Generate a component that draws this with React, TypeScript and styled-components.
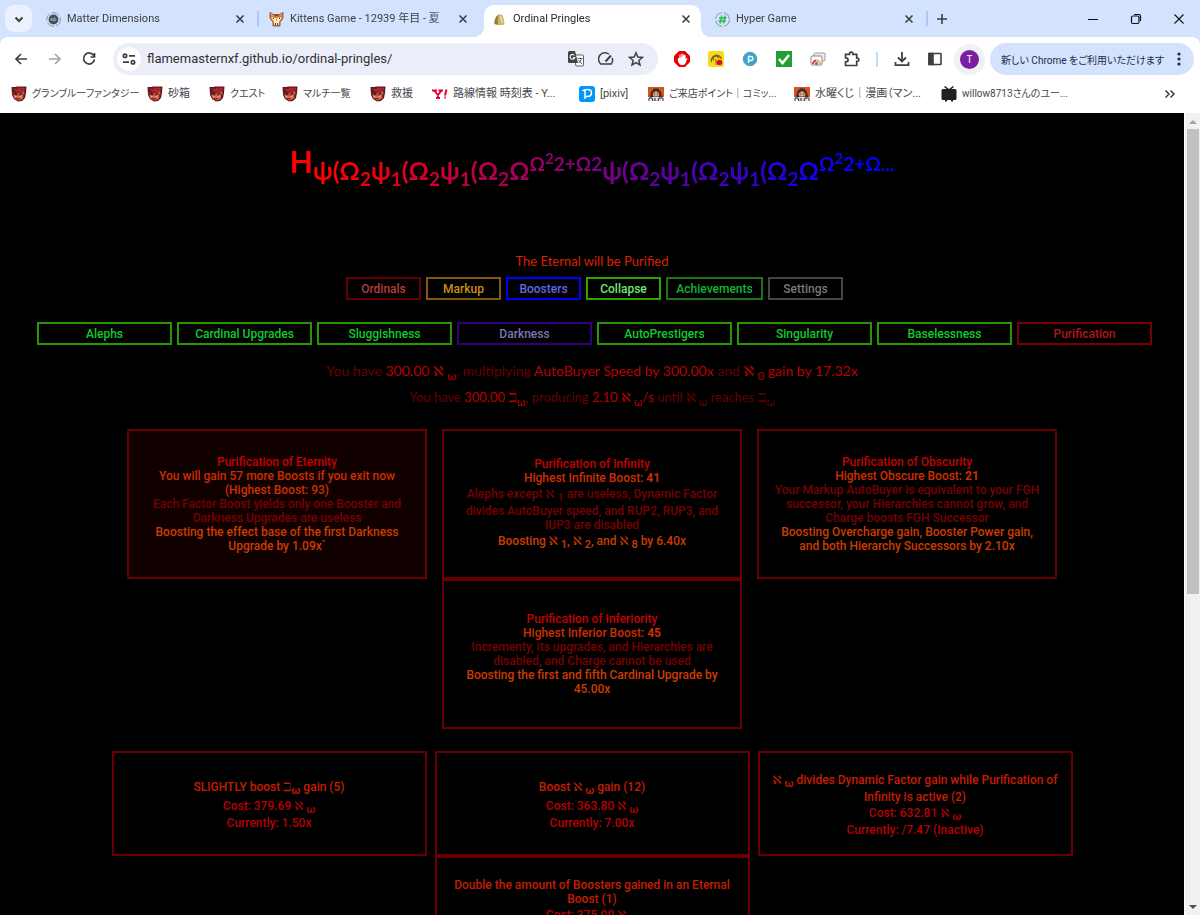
import React from "react";
import styled, { createGlobalStyle, css } from "styled-components";

const uiFont = `Roboto, "Noto Sans CJK JP", sans-serif`;
const gameFont = `Roboto, "DejaVu Sans", sans-serif`;
const narrowFont = `Lato, "DejaVu Sans", sans-serif`;

const GlobalStyle = createGlobalStyle`
  * { box-sizing: border-box; }
  body { margin: 0; background: #000; overflow: hidden; }
  button, input { font: inherit; }
  sub, sup { line-height: 0; }
`;

const Browser = styled.div`
  display: flex;
  flex-direction: column;
  height: 100vh;
  font-family: ${uiFont};
`;

/* ---------- tab strip ---------- */

const TabStrip = styled.div`
  display: flex;
  align-items: center;
  flex: none;
  height: 37px;
  padding-left: 5px;
  background: #d3e3fd;
`;

const IconButton = styled.button<{ $w?: number; $tone?: string }>`
  display: flex;
  align-items: center;
  justify-content: center;
  flex: none;
  width: ${(p) => p.$w ?? 24}px;
  height: 24px;
  padding: 0;
  border: 0;
  background: none;
  color: ${(p) => p.$tone ?? "#3c4043"};
`;

const TabSearch = styled(IconButton)`
  width: 27px;
  height: 27px;
  margin-right: 6px;
  border-radius: 9px;
  background: #ebf2fe;
`;

const Tab = styled.div<{ $active?: boolean; $divider?: boolean }>`
  position: relative;
  display: flex;
  align-items: center;
  flex: 0 1 217px;
  min-width: 0;
  align-self: flex-end;
  height: 32px;
  margin-right: 6px;
  padding: 0 7px 4px 8px;
  gap: 6px;
  font-size: 11px;
  line-height: 16px;
  color: #3c4046;
  ${(p) =>
    p.$active &&
    css`
      background: #fff;
      border-radius: 10px 10px 0 0;
      color: #26282b;
      &::before, &::after {
        content: "";
        position: absolute;
        bottom: 0;
        width: 10px;
        height: 10px;
      }
      &::before { left: -10px; background: radial-gradient(circle at 0 0, transparent 10px, #fff 10px); }
      &::after { right: -10px; background: radial-gradient(circle at 100% 0, transparent 10px, #fff 10px); }
    `}
  ${(p) =>
    p.$divider &&
    css`
      &::after {
        content: "";
        position: absolute;
        right: -4px;
        top: 6px;
        width: 2px;
        height: 15px;
        background: #a8c7fa;
      }
    `}
`;

const TabTitle = styled.span`
  flex: 1;
  overflow: hidden;
  white-space: nowrap;
  mask-image: linear-gradient(to right, #000 88%, transparent 105%);
`;

const CloseButton = styled(IconButton)`
  width: 16px;
  height: 16px;
`;

const WindowControls = styled.div`
  display: flex;
  margin-left: auto;
`;

/* ---------- toolbar ---------- */

const Toolbar = styled.div`
  display: flex;
  align-items: center;
  flex: none;
  height: 44px;
  padding: 0 6px 0 4px;
  background: #fff;
  border-radius: 8px 8px 0 0;
`;

const ToolbarBack = styled.div`
  flex: none;
  background: #d3e3fd;
`;

const Omnibox = styled.form`
  display: flex;
  align-items: center;
  flex: 1;
  height: 32px;
  margin: 0 7px 0 7px;
  padding: 0 7px 0 4px;
  border-radius: 16px;
  background: #ebeef8;
`;

const SiteInfo = styled(IconButton)`
  border-radius: 50%;
  background: #fff;
  margin-right: 6px;
`;

const Address = styled.input`
  flex: 1;
  min-width: 0;
  padding: 0;
  border: 0;
  outline: 0;
  background: none;
  font-size: 13px;
  line-height: 18px;
  color: #2f3136;
`;

const ToolDivider = styled.span`
  width: 2px;
  height: 15px;
  margin: 0 7px;
  background: #c6dafc;
`;

const Profile = styled.button`
  display: flex;
  align-items: center;
  justify-content: center;
  flex: none;
  width: 31px;
  height: 31px;
  margin: 0 5px 0 3px;
  padding: 0;
  border: 6px solid #f1f1f1;
  border-radius: 50%;
  background: #7b1fa2;
  color: #fff;
  font-size: 10px;
`;

const UpdateButton = styled.button`
  display: flex;
  align-items: center;
  justify-content: space-between;
  flex: none;
  width: 204px;
  height: 32px;
  padding: 0 13px 0 11px;
  border: 0;
  border-radius: 16px;
  background: #d3e3fd;
  color: #1c2b4a;
  font-size: 10px;
  white-space: nowrap;
  font-feature-settings: "palt";
`;

/* ---------- bookmarks ---------- */

const Bookmarks = styled.nav`
  display: flex;
  align-items: center;
  flex: none;
  height: 32px;
  padding: 0 21px 6px 11px;
  background: #fff;
`;

const Bookmark = styled.a<{ $w: number; $small: boolean }>`
  display: flex;
  align-items: center;
  flex: none;
  gap: 5px;
  width: ${(p) => p.$w}px;
  color: #44474c;
  font-size: ${(p) => (p.$small ? 10 : 11)}px;
  line-height: 16px;
  white-space: nowrap;
  text-decoration: none;
  font-feature-settings: "palt";
  svg { flex: none; }
`;

const MoreBookmarks = styled(IconButton)`
  width: 18px;
  margin-left: auto;
`;

/* ---------- page ---------- */

const Viewport = styled.div`
  display: flex;
  flex: 1;
  min-height: 0;
`;

const Page = styled.main`
  flex: 1;
  overflow: hidden;
  background: #000;
  font-family: ${gameFont};
  text-align: center;
`;

const Ordinal = styled.h1`
  width: fit-content;
  height: 64px;
  margin: 28px auto 0;
  font: 700 30px/40px Lato, "DejaVu Sans", sans-serif;
  white-space: nowrap;
  color: transparent;
  background: linear-gradient(to right, #f00 8%, #800080 50%, #00f 94%);
  background-clip: text;
  -webkit-background-clip: text;
`;

const Low = styled.sub`
  font-size: 25px;
  sub, sup { font-size: 19px; }
  sup sup { font-size: 15px; }
`;

const Tagline = styled.p`
  margin: 46px 0 0;
  font: 13px/20px ${narrowFont};
  color: #d92000;
`;

const TabRow = styled.nav<{ $top: number }>`
  display: flex;
  justify-content: center;
  gap: 5px;
  margin-top: ${(p) => p.$top}px;
  padding-left: 5px;
`;

const GameTab = styled.button<{ $border: string; $ink: string; $w: number }>`
  width: ${(p) => p.$w}px;
  height: 23px;
  padding: 0;
  border: 2px solid ${(p) => p.$border};
  background: #000;
  color: ${(p) => p.$ink};
  font-size: 12px;
  font-weight: 500;
  line-height: 16px;
`;

const Status = styled.p<{ $size: number }>`
  margin: 0;
  font: ${(p) => p.$size}px/26px ${narrowFont};
  color: #660000;
  b { font-weight: 400; color: #b80000; }
`;

const StatusBlock = styled.section`
  margin-top: 13px;
`;

const CardGrid = styled.section<{ $w: number; $gap: number; $top: number }>`
  display: grid;
  grid-template-columns: repeat(3, ${(p) => p.$w}px);
  column-gap: ${(p) => p.$gap}px;
  justify-content: center;
  margin-top: ${(p) => p.$top}px;
`;

const Card = styled.button<{ $h: number; $active?: boolean; $middle?: boolean }>`
  height: ${(p) => p.$h}px;
  padding: 0 4px;
  border: 2px solid #660000;
  background: ${(p) => (p.$active ? "#110000" : "#000")};
  font-size: 12px;
  font-weight: 500;
  line-height: 14px;
  ${(p) => p.$middle && css`grid-column: 2;`}
  sub { font-size: 11px; }
`;

const Line = styled.span<{ $tone: keyof typeof tones; $tall?: boolean }>`
  display: block;
  line-height: ${(p) => (p.$tall ? 19 : 14)}px;
  color: ${(p) => tones[p.$tone]};
`;

const tones = {
  name: "#c40000",
  best: "#cc2f00",
  rule: "#770000",
  boost: "#cc3c00",
  effect: "#c41e00",
  cost: "#b80000",
};

const Scrollbar = styled.div`
  display: flex;
  flex-direction: column;
  align-items: center;
  flex: none;
  width: 16px;
  background: #f1f1f1;
  border-left: 1px solid #fff;
`;

const Thumb = styled.div`
  width: 12px;
  height: 58%;
  background: #c1c1c1;
`;

const ScrollArrow = styled(IconButton)`
  width: 15px;
  height: 16px;
  &:last-child { margin-top: auto; }
`;

/* ---------- drawings ---------- */

const Stroke = ({ d, s = 16, w = 2, children }: { d?: string; s?: number; w?: number; children?: React.ReactNode }) => (
  <svg width={s} height={s} viewBox="0 0 16 16" fill="none" stroke="currentColor" strokeWidth={w}>
    {d && <path d={d} />}
    {children}
  </svg>
);

const Close = ({ label }: { label: string }) => (
  <CloseButton aria-label={`Close ${label}`}>
    <Stroke d="M4.5 4.5l7 7M11.500 4.5l-7 7" w={1.6} />
  </CloseButton>
);

const MatterIcon = () => (
  <svg width="15" height="15" viewBox="0 0 15 15">
    <circle cx="7.500" cy="7.500" r="6.800" fill="none" stroke="#87929f" strokeWidth="1" strokeDasharray="8 2" />
    <circle cx="7.500" cy="7.500" r="4.900" fill="#43515e" />
    <path d="M5 9V6l2 3V6M8 6h1q2 1.500 0 3H8z" fill="none" stroke="#aab4bd" strokeWidth=".8" />
  </svg>
);

const KittenIcon = () => (
  <svg width="15" height="15" viewBox="0 0 15 15">
    <path d="M1 .5L4.500 2.500h6L14 .5v5L13 8l-2 1.500V14H4V9.500L2 8 1 5.500z" fill="#d9823a" stroke="#8a3c1c" strokeWidth=".8" />
    <path d="M2 6l2.500-1 3 1.500L10.500 5l2.500 1-2.500 2.500L9.500 13h-4l-1-4.500z" fill="#fff0c8" />
    <path d="M4.500 5.500v1.500M10.500 5.500v1.500M7 8h1M6 2.500v2M9 2.500v2M7.500 3v1M6.500 13v-2M8.500 13v-2" stroke="#7d3214" />
    <path d="M2 2l1.500 1M13 2l-1.500 1" stroke="#f4c79a" />
  </svg>
);

const PringleIcon = () => (
  <svg width="15" height="15" viewBox="0 0 15 15">
    <path d="M2.500 12Q2 5 7 2.500 10.500 1 11.500 6l1 6q-1 1.500-4 1-3.500.5-6-1z" fill="#cdb76b" />
    <path d="M2.500 12Q2 5 7 2.500 5 7 6 12.500z" fill="#94803c" />
    <path d="M8 4q2 3 2 7" stroke="#ebe2b0" fill="none" strokeWidth="1.500" />
  </svg>
);

const HyperIcon = () => (
  <svg width="15" height="15" viewBox="0 0 15 15" fill="none">
    <circle cx="7.500" cy="7.500" r="6.800" stroke="#85939c" strokeDasharray="9 2" />
    <path d="M6.800 3.500L5 11.500M10.200 3.500L8.400 11.500M4 6h7.500M3.500 9H11" stroke="#27b84a" strokeWidth="1.300" />
  </svg>
);

const HeroIcon = () => (
  <svg width="16" height="16" viewBox="0 0 16 16">
    <path d="M.5 1h4L6 .5h9.500L15 7l-1 5-3 3-4 .5L3 13 1 9z" fill="#5f1822" />
    <path d="M1.500 6l3 2 6-1.500L13 5l.5 3-2 5-4 1.500L3.500 12z" fill="#d9674a" />
    <path d="M1.500 2L5 3l4-1.500 5.500.5L13 5 9.500 6.500 5 6z" fill="#a8232b" />
    <path d="M2 7.500l4.500 1.500M8 9l3.500-2" stroke="#401318" strokeWidth="1.300" />
    <path d="M5 12.500l4 .3M12.500 8v3" stroke="#7d2320" strokeWidth="1.200" />
    <path d="M3.500 10.500l2 .5M8.500 11l2-.8" stroke="#f0a57c" strokeWidth="1.200" />
  </svg>
);

const YahooIcon = () => (
  <svg width="16" height="16" viewBox="0 0 16 16" fill="none" stroke="#e8002d">
    <path d="M0 4.500h5M6.500 4.500H11M2 4.500l4 4.500 3.500-4.500M6 8v4M4 12h4" strokeWidth="1.800" />
    <path d="M14.500 3.500l-1.500 6M12.300 11.500h1.500" strokeWidth="2" />
  </svg>
);

const PixivIcon = () => (
  <svg width="16" height="16" viewBox="0 0 16 16" fill="none">
    <rect width="16" height="16" rx="3" fill="#0096fa" />
    <path d="M6 13V4M3.500 5Q5 3.500 8.500 3.500q4 0 4 3.500t-4 3.500H6" stroke="#fff" strokeWidth="1.500" />
  </svg>
);

const ComicIcon = () => (
  <svg width="16" height="16" viewBox="0 0 16 16">
    <rect x="0" y="1" width="16" height="10" fill="#d8511e" />
    <path d="M2 11l1-5 3-3.500h4L13 6l1 5-3 2H5z" fill="#3b2d2a" />
    <path d="M4.500 8q3.500-5.500 7 0l-1 2.500h-5z" fill="#e8a276" />
    <path d="M3 11h10v4H3z" fill="#ddd" />
    <path d="M1 15v-3h3l1 3M7 12v3M10 15l1-3h4v3M6 8h1M9 8h1" stroke="#2d2422" fill="none" />
  </svg>
);

const TvIcon = () => (
  <svg width="16" height="16" viewBox="0 0 16 16" fill="#231f20">
    <rect x="0.500" y="3" width="15" height="11" rx="1.500" />
    <path d="M3 1l1-1 4 3 4-3 1 1-4 3H7zM4 13h2v2.500H4zM10 13h2v2.500h-2z" />
  </svg>
);

const bookmarks: [string, number, React.FC, boolean][] = [
  ["グランブルーファンタジー", 136, HeroIcon, true],
  ["砂箱", 62, HeroIcon, false],
  ["クエスト", 73, HeroIcon, true],
  ["マルチ一覧", 88, HeroIcon, true],
  ["救援", 62, HeroIcon, false],
  ["路線情報 時刻表 - Y...", 147, YahooIcon, false],
  ["[pixiv]", 69, PixivIcon, false],
  ["ご来店ポイント｜コミッ...", 146, ComicIcon, true],
  ["水曜くじ｜漫画（マン...", 147, ComicIcon, false],
  ["willow8713さんのユー...", 150, TvIcon, true],
];

const mainTabs: [string, string, string, number][] = [
  ["Ordinals", "#660000", "#b83c3c", 75],
  ["Markup", "#805a10", "#cc8f14", 75],
  ["Boosters", "#0000ff", "#6464e6", 75],
  ["Collapse", "#2ea200", "#73e673", 75],
  ["Achievements", "#1e7314", "#14b432", 97],
  ["Settings", "#464646", "#787878", 75],
];

const subTabs: [string, string, string][] = [
  ["Alephs", "#289600", "#14c832"],
  ["Cardinal Upgrades", "#289600", "#14c832"],
  ["Sluggishness", "#289600", "#14c832"],
  ["Darkness", "#320078", "#7878aa"],
  ["AutoPrestigers", "#289600", "#14c832"],
  ["Singularity", "#289600", "#14c832"],
  ["Baselessness", "#289600", "#14c832"],
  ["Purification", "#780000", "#b41414"],
];

const Aleph = ({ n = "ω" }: { n?: string }) => (
  <>
    {"ℵ"} <sub>{n}</sub>
  </>
);

const Beth = () => (
  <>
    {"ℶ"}
    <sub>ω</sub>
  </>
);

const PsiChain = () => (
  <>
    ψ(Ω<sub>2</sub>ψ<sub>1</sub>(Ω<sub>2</sub>ψ<sub>1</sub>(Ω<sub>2</sub>Ω
  </>
);

export default function App() {
  return (
    <Browser>
      <GlobalStyle />
      <TabStrip>
        <TabSearch aria-label="Search tabs"><Stroke d="M4.5 6.500L8 10l3.500-3.500" /></TabSearch>
        <Tab $divider><MatterIcon /><TabTitle>Matter Dimensions</TabTitle><Close label="Matter Dimensions" /></Tab>
        <Tab><KittenIcon /><TabTitle>Kittens Game - 12939 年目 - 夏</TabTitle><Close label="Kittens Game" /></Tab>
        <Tab $active><PringleIcon /><TabTitle>Ordinal Pringles</TabTitle><Close label="Ordinal Pringles" /></Tab>
        <Tab $divider><HyperIcon /><TabTitle>Hyper Game</TabTitle><Close label="Hyper Game" /></Tab>
        <IconButton aria-label="New tab"><Stroke d="M8 3v10M3 8h10" w={1.6} /></IconButton>
        <WindowControls>
          <IconButton $w={43} $tone="#111" aria-label="Minimize"><Stroke d="M3 8.500h10" w={1} /></IconButton>
          <IconButton $w={43} $tone="#111" aria-label="Restore">
            <Stroke w={1.2}><rect x="3.500" y="5" width="7.500" height="7.500" rx="1.500" /><path d="M6 3.500h5q1.500 0 1.500 1.500v5" /></Stroke>
          </IconButton>
          <IconButton $w={43} $tone="#111" aria-label="Close window"><Stroke d="M3.500 3.500l9 9M12.500 3.500l-9 9" w={1.1} /></IconButton>
        </WindowControls>
      </TabStrip>

      <ToolbarBack>
        <Toolbar>
          <IconButton $w={34} aria-label="Back"><Stroke d="M14 8H3M8 3L3 8l5 5" w={1.7} /></IconButton>
          <IconButton $w={34} $tone="#a3a5a8" aria-label="Forward"><Stroke d="M2 8h11M8 3l5 5-5 5" w={1.7} /></IconButton>
          <IconButton $w={34} aria-label="Reload"><Stroke d="M13 5A5.500 5.500 0 1 0 13.500 8.500M13.500 2v4h-4" w={1.7} /></IconButton>
          <Omnibox onSubmit={(e) => e.preventDefault()}>
            <SiteInfo type="button" aria-label="Site information">
              <Stroke w={1.7}><circle cx="4" cy="4.800" r="1.700" /><path d="M8 4.800h6M2 11.200h6" /><circle cx="12" cy="11.200" r="1.700" /></Stroke>
            </SiteInfo>
            <Address aria-label="Address" defaultValue="flamemasternxf.github.io/ordinal-pringles/" />
            <IconButton $w={30} type="button" aria-label="Translate">
              <svg width="16" height="16" viewBox="0 0 16 16">
                <path d="M6 4h8.500q1 0 1 1v9q0 1-1 1H8z" fill="#fff" stroke="#5f6368" />
                <path d="M1.500 0H7l3 12H1.500Q0 12 0 10.500v-9Q0 0 1.500 0z" fill="#3f4246" />
                <path d="M6.500 4.500A2.400 2.400 0 1 0 6.800 6.500H4.800" fill="none" stroke="#fff" strokeWidth="1.100" />
                <path d="M9.500 7.500h5M12 6.500v1M13.500 7.500q-1 3-3 4.500M10.500 9l3.500 4" fill="none" stroke="#5f6368" />
              </svg>
            </IconButton>
            <IconButton $w={30} type="button" aria-label="Performance">
              <Stroke w={1.5}><path d="M11 3.300A6.300 6.300 0 0 0 2.800 13h10.400a6.300 6.300 0 0 0 1-6" /><path d="M7.500 10.500L13 4.500" strokeWidth="2" /></Stroke>
            </IconButton>
            <IconButton $w={30} type="button" aria-label="Bookmark">
              <Stroke d="M8 1.800l1.800 4.200 4.600.4-3.500 3 1.100 4.500L8 11.500l-4 2.400 1.100-4.500-3.500-3L6.200 6z" w={1.5} />
            </IconButton>
          </Omnibox>
          <IconButton $w={34} aria-label="Ad blocker">
            <svg width="16" height="16" viewBox="0 0 16 16">
              <path d="M5 0h6l5 5v6l-5 5H5l-5-5V5z" fill="#e8000b" />
              <path d="M4.500 7.500v2q1 4 4 4 2.500 0 3-3l1-2.500-1.500.5V4.500M6 8V4M8 8V3M9.800 8V3.800" fill="#fff" stroke="#fff" strokeWidth="1.200" strokeLinecap="round" />
            </svg>
          </IconButton>
          <IconButton $w={34} aria-label="Radio recorder">
            <svg width="16" height="16" viewBox="0 0 16 16" fill="none">
              <rect width="16" height="16" rx="2.500" fill="#f7dc1a" />
              <path d="M3.500 11A5.200 5.200 0 1 1 13.500 8M5.700 9.500A2.800 2.800 0 1 1 10.800 7.500" stroke="#786522" strokeWidth="1.300" />
              <path d="M8 8v6" stroke="#786522" />
              <circle cx="11.500" cy="11.500" r="2.800" fill="#d50f1d" />
            </svg>
          </IconButton>
          <IconButton $w={34} aria-label="Pixiv helper">
            <svg width="16" height="16" viewBox="0 0 16 16" fill="none">
              <circle cx="8" cy="8" r="6.800" fill="#35a8d0" stroke="#78909c" />
              <path d="M6.500 12V5.500h2q2.500 0 2.500 2t-2.500 2h-2" stroke="#fff" strokeWidth="1.300" />
            </svg>
          </IconButton>
          <IconButton $w={34} aria-label="Checker">
            <svg width="16" height="16" viewBox="0 0 16 16" fill="none">
              <rect width="16" height="16" fill="#1f9f35" />
              <path d="M3 8l3.500 4L13 4" stroke="#fff" strokeWidth="2.500" />
            </svg>
          </IconButton>
          <IconButton $w={34} aria-label="Screen cast">
            <svg width="16" height="16" viewBox="0 0 16 16" fill="none">
              <rect x="4" y="2" width="11" height="8" rx="1" stroke="#9a9a9a" fill="#eee" />
              <rect x="1" y="5" width="11" height="9" rx="1" stroke="#8a8a8a" fill="#fff" />
              <path d="M3 13a3.500 3.500 0 0 1 3.500-3.500" stroke="#e33b2e" strokeWidth="2" />
              <path d="M6.500 9.500A3.500 3.500 0 0 1 10 13" stroke="#f2b51d" strokeWidth="2" />
              <circle cx="6.500" cy="12.500" r="1.600" fill="#3d7de8" />
            </svg>
          </IconButton>
          <IconButton $w={34} aria-label="Extensions">
            <Stroke d="M1.500 3.300h4V2.800a1.700 1.700 0 0 1 3.400 0v.5h3.800v3.800h.6a1.600 1.600 0 0 1 0 3.200h-.6v4.200H1.500v-3.600q2.600-.2 2.600-2t-2.600-2z" w={1.7} />
          </IconButton>
          <ToolDivider />
          <IconButton $w={34} aria-label="Downloads"><Stroke d="M8 1v9M4 6.500l4 4 4-4M1.500 11v3.200h13V11" w={1.8} /></IconButton>
          <IconButton $w={32} aria-label="Side panel">
            <Stroke w={1.6}><rect x="2" y="2.500" width="12" height="11" rx=".5" /><path d="M2 2.500h4v11H2z" fill="currentColor" /></Stroke>
          </IconButton>
          <Profile aria-label="Profile">T</Profile>
          <UpdateButton>
            新しい Chrome をご利用いただけます
            <svg width="4" height="14" viewBox="0 0 4 14" fill="currentColor">
              <circle cx="2" cy="2" r="1.600" /><circle cx="2" cy="7" r="1.600" /><circle cx="2" cy="12" r="1.600" />
            </svg>
          </UpdateButton>
        </Toolbar>
      </ToolbarBack>

      <Bookmarks aria-label="Bookmarks">
        {bookmarks.map(([name, width, Icon, small]) => (
          <Bookmark key={name} href="#" $w={width} $small={small}><Icon />{name}</Bookmark>
        ))}
        <MoreBookmarks aria-label="More bookmarks"><Stroke d="M3.500 4.500L7 8l-3.500 3.500M8.500 4.500L12 8l-3.500 3.500" w={1.5} /></MoreBookmarks>
      </Bookmarks>

      <Viewport>
        <Page>
          <Ordinal>
            H
            <Low>
              <PsiChain /><sup>Ω<sup>2</sup>2+Ω2</sup>
              <PsiChain /><sup>Ω<sup>2</sup>2+Ω...</sup>
            </Low>
          </Ordinal>
          <Tagline>The Eternal will be Purified</Tagline>

          <TabRow $top={6} aria-label="Sections">
            {mainTabs.map(([name, border, ink, width]) => (
              <GameTab key={name} $border={border} $ink={ink} $w={width}>{name}</GameTab>
            ))}
          </TabRow>
          <TabRow $top={22} aria-label="Collapse sections">
            {subTabs.map(([name, border, ink]) => (
              <GameTab key={name} $border={border} $ink={ink} $w={135}>{name}</GameTab>
            ))}
          </TabRow>

          <StatusBlock>
            <Status $size={14}>
              You have <b>300.00 <Aleph /></b>, multiplying <b>AutoBuyer Speed by 300.00x</b> and <b><Aleph n="0" /> gain by 17.32x</b>
            </Status>
            <Status $size={13}>
              You have <b>300.00 <Beth /></b>, producing <b>2.10 <Aleph />/s</b> until <Aleph /> reaches <Beth />
            </Status>
          </StatusBlock>

          <CardGrid $w={300} $gap={15} $top={19}>
            <Card $h={150} $active>
              <Line $tone="name">Purification of Eternity</Line>
              <Line $tone="best">You will gain 57 more Boosts if you exit now<br />(Highest Boost: 93)</Line>
              <Line $tone="rule">Each Factor Boost yields only one Booster and<br />Darkness Upgrades are useless</Line>
              <Line $tone="boost">Boosting the effect base of the first Darkness<br />Upgrade by 1.09x`</Line>
            </Card>
            <Card $h={150}>
              <Line $tone="name">Purification of Infinity</Line>
              <Line $tone="best">Highest Infinite Boost: <b>41</b></Line>
              <Line $tone="rule" $tall>Alephs except <Aleph n="1" /> are useless, Dynamic Factor</Line>
              <Line $tone="rule">divides AutoBuyer speed, and RUP2, RUP3, and<br />IUP3 are disabled</Line>
              <Line $tone="boost" $tall>Boosting <Aleph n="1" />, <Aleph n="2" />, and <Aleph n="8" /> by 6.40x</Line>
            </Card>
            <Card $h={150}>
              <Line $tone="name">Purification of Obscurity</Line>
              <Line $tone="best">Highest Obscure Boost: <b>21</b></Line>
              <Line $tone="rule">Your Markup AutoBuyer is equivalent to your FGH<br />successor, your Hierarchies cannot grow, and<br />Charge boosts FGH Successor</Line>
              <Line $tone="boost">Boosting Overcharge gain, Booster Power gain,<br />and both Hierarchy Successors by 2.10x</Line>
            </Card>
            <Card $h={150} $middle>
              <Line $tone="name">Purification of Inferiority</Line>
              <Line $tone="best">Highest Inferior Boost: <b>45</b></Line>
              <Line $tone="rule">Incrementy, its upgrades, and Hierarchies are<br />disabled, and Charge cannot be used</Line>
              <Line $tone="boost">Boosting the first and fifth Cardinal Upgrade by<br />45.00x</Line>
            </Card>
          </CardGrid>

          <CardGrid $w={315} $gap={8} $top={22}>
            <Card $h={105}>
              <Line $tone="effect" $tall>SLIGHTLY boost <Beth /> gain (5)</Line>
              <Line $tone="cost" $tall>Cost: 379.69 <Aleph /></Line>
              <Line $tone="cost">Currently: 1.50x</Line>
            </Card>
            <Card $h={105}>
              <Line $tone="effect" $tall>Boost <Aleph /> gain (12)</Line>
              <Line $tone="cost" $tall>Cost: 363.80 <Aleph /></Line>
              <Line $tone="cost">Currently: 7.00x</Line>
            </Card>
            <Card $h={105}>
              <Line $tone="effect" $tall><Aleph /> divides Dynamic Factor gain while Purification of</Line>
              <Line $tone="effect">Infinity is active (2)</Line>
              <Line $tone="cost" $tall>Cost: 632.81 <Aleph /></Line>
              <Line $tone="cost">Currently: /7.47 (Inactive)</Line>
            </Card>
            <Card $h={90} $middle>
              <Line $tone="effect">Double the amount of Boosters gained in an Eternal<br />Boost (1)</Line>
              <Line $tone="cost" $tall>Cost: 375.00 <Aleph /></Line>
            </Card>
          </CardGrid>
        </Page>
        <Scrollbar aria-hidden="true">
          <ScrollArrow $tone="#a3a3a3" tabIndex={-1}><svg width="8" height="5" viewBox="0 0 8 5" fill="currentColor"><path d="M0 5l4-4 4 4z" /></svg></ScrollArrow>
          <Thumb />
          <ScrollArrow $tone="#505050" tabIndex={-1}><svg width="8" height="5" viewBox="0 0 8 5" fill="currentColor"><path d="M0 0l4 4 4-4z" /></svg></ScrollArrow>
        </Scrollbar>
      </Viewport>
    </Browser>
  );
}
